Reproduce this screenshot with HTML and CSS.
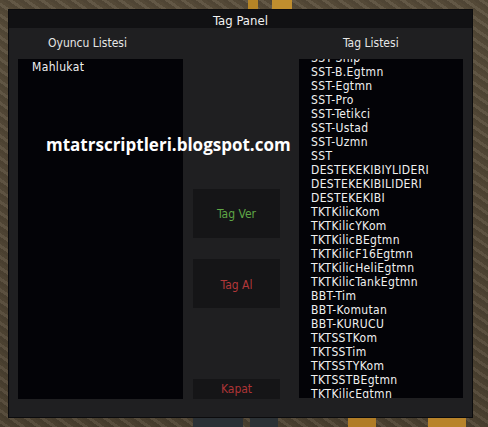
FILE: index.html
```html
<!DOCTYPE html>
<html lang="tr">
<head>
<meta charset="utf-8">
<title>Tag Panel</title>
<link rel="stylesheet" href="styles.css">
</head>
<body>
<div class="scene">
  <div class="window">
    <div class="titlebar">Tag Panel</div>
    <div class="content">
      <div class="col col-left">
        <div class="col-label label-left">Oyuncu Listesi</div>
        <div class="list list-players">
          <div class="row">Mahlukat</div>
        </div>
      </div>
      <div class="col col-mid">
        <button class="btn btn-give">Tag Ver</button>
        <button class="btn btn-take">Tag Al</button>
        <button class="btn btn-close">Kapat</button>
      </div>
      <div class="col col-right">
        <div class="col-label label-right">Tag Listesi</div>
        <div class="list list-tags">
          <div class="list-inner">
            <div class="row">SST-Snip</div>
            <div class="row">SST-B.Egtmn</div>
            <div class="row">SST-Egtmn</div>
            <div class="row">SST-Pro</div>
            <div class="row">SST-Tetikci</div>
            <div class="row">SST-Ustad</div>
            <div class="row">SST-Uzmn</div>
            <div class="row">SST</div>
            <div class="row">DESTEKEKIBIYLIDERI</div>
            <div class="row">DESTEKEKIBILIDERI</div>
            <div class="row">DESTEKEKIBI</div>
            <div class="row">TKTKilicKom</div>
            <div class="row">TKTKilicYKom</div>
            <div class="row">TKTKilicBEgtmn</div>
            <div class="row">TKTKilicF16Egtmn</div>
            <div class="row">TKTKilicHeliEgtmn</div>
            <div class="row">TKTKilicTankEgtmn</div>
            <div class="row">BBT-Tim</div>
            <div class="row">BBT-Komutan</div>
            <div class="row">BBT-KURUCU</div>
            <div class="row">TKTSSTKom</div>
            <div class="row">TKTSSTim</div>
            <div class="row">TKTSSTYKom</div>
            <div class="row">TKTSSTBEgtmn</div>
            <div class="row">TKTKilicEgtmn</div>
          </div>
        </div>
      </div>
    </div>
    <div class="watermark">mtatrscriptleri.blogspot.com</div>
  </div>
</div>
</body>
</html>
```

FILE: styles.css
```css
* { box-sizing: border-box; }

html, body {
  margin: 0;
  padding: 0;
}

body {
  width: 488px;
  height: 427px;
  overflow: hidden;
  background-color: #564a38;
  background-image:
    linear-gradient(90deg, transparent 0 248px, #b58426 248px 258px, transparent 258px 272px, #c08e2e 272px 292px, transparent 292px),
    linear-gradient(90deg, transparent 0 193px, #2b3136 193px 243px, transparent 243px 250px, #2c3236 250px 278px, transparent 278px 348px, #b07c26 348px 376px, transparent 376px 428px, #b8832a 428px 466px, transparent 466px),
    repeating-linear-gradient(35deg, rgba(0,0,0,0.12) 0 3px, rgba(255,255,255,0.05) 3px 6px, rgba(0,0,0,0.08) 6px 9px),
    linear-gradient(180deg, #5b4f3c, #4f4433);
  background-size: 488px 9px, 488px 9px, auto, auto;
  background-position: 0 0, 0 418px, 0 0, 0 0;
  background-repeat: no-repeat, no-repeat, repeat, no-repeat;
  font-family: "DejaVu Sans Condensed", "DejaVu Sans", sans-serif;
  font-stretch: condensed;
  font-size: 12px;
  color: #ececec;
}

.scene {
  padding: 9px 0 0 8px;
}

.window {
  position: relative;
  width: 465px;
  height: 409px;
  background: #1f1f21;
  border: 1px solid #0b0b0d;
  display: flex;
  flex-direction: column;
}

.titlebar {
  height: 18px;
  padding-top: 3px;
  line-height: 15px;
  font-size: 13px;
  text-align: center;
  background: #111113;
  color: #f2f2f2;
}

.content {
  display: flex;
  padding: 0 9px;
  gap: 10px;
}

.col-left { width: 165px; }
.col-mid {
  width: 87px;
  display: flex;
  flex-direction: column;
  padding-top: 161px;
  margin-right: 9px;
}
.col-right { width: 164px; }

.col-label {
  height: 31px;
  padding-top: 8px;
  line-height: 14px;
  color: #e6e6e6;
}
.label-left { padding-left: 30px; }
.label-right { padding-left: 44px; }

.list {
  background: #030307;
  overflow: hidden;
}
.list-players {
  height: 340px;
  padding: 1px 0 0 14px;
}
.list-tags {
  height: 339px;
  padding-left: 12px;
}
.list-inner {
  margin-top: -8px;
}

.row {
  line-height: 14px;
  height: 14px;
  white-space: nowrap;
  color: #f0f0f0;
  letter-spacing: 0.35px;
}

.btn {
  display: block;
  width: 87px;
  border: 0;
  padding: 0;
  margin: 0;
  background: #151517;
  font: inherit;
  font-stretch: condensed;
  text-align: center;
  line-height: 14px;
}
.btn-give {
  height: 49px;
  color: #5fa646;
  margin-bottom: 21px;
}
.btn-take {
  height: 49px;
  color: #b3383a;
  padding-top: 2px;
  margin-bottom: 71px;
}
.btn-close {
  height: 20px;
  color: #ad3436;
}

.watermark {
  position: absolute;
  left: 37px;
  top: 123px;
  font-family: "Open Sans", sans-serif;
  font-stretch: normal;
  font-weight: 700;
  font-size: 17px;
  line-height: 24px;
  color: #ffffff;
  white-space: nowrap;
}
```
